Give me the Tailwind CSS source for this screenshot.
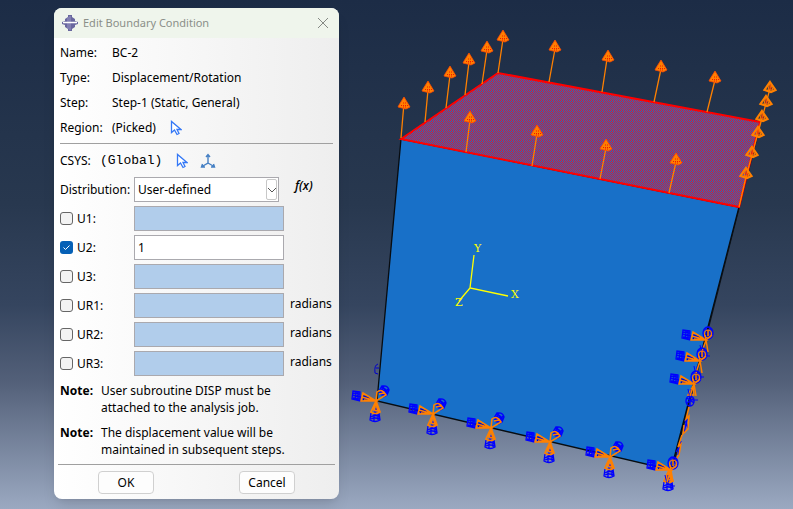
<!DOCTYPE html>
<html lang="en">
<head>
<meta charset="utf-8">
<title>Edit Boundary Condition</title>
<script src="https://cdn.jsdelivr.net/npm/@tailwindcss/browser@4"></script>
</head>
<body class="relative min-h-screen overflow-hidden bg-linear-to-b from-[#1c2c46] via-[#2c3c56] via-50% to-[#9ba9c1] font-['Noto_Sans',sans-serif] text-xs text-black">
<svg class="absolute inset-0 h-full w-full" viewBox="0 0 793 509" preserveAspectRatio="xMinYMin slice" role="img" aria-label="Model viewport">
  <defs>
    <linearGradient id="sky" x1="0" y1="0" x2="0" y2="1">
      <stop offset="0" stop-color="#1c2c46"/><stop offset=".4" stop-color="#28384f"/><stop offset=".6" stop-color="#35455f"/><stop offset=".75" stop-color="#536079"/><stop offset="1" stop-color="#9ba9c1"/>
    </linearGradient>
    <pattern id="mesh" width="2" height="2" patternUnits="userSpaceOnUse">
      <rect width="2" height="2" fill="#1870c8"/><rect width="1" height="1" fill="#e6142a"/><rect x="1" y="1" width="1" height="1" fill="#e6142a"/>
    </pattern>
    <g id="head">
      <path d="M0 0L6 10L2 12L-6 10L-5 8Z" fill="#ff8000" stroke="#ff4a00" stroke-width=".8"/>
      <path d="M-3 8.500H4M-1 6H2M-1 10H2" stroke="#f01800" stroke-width="1" stroke-dasharray="1 1"/>
    </g>
    <g id="openhead">
      <path d="M0 1L5.500 9L1 11L-5.500 9Z" fill="none" stroke="#ff8000" stroke-width="2.200"/>
      <path d="M0 1L-2 9L3 9Z" fill="#e02010" fill-opacity=".5" stroke="#ff8000"/>
    </g>
    <g id="left" fill="none">
      <path d="M-16 -9L-23 -10L-24 -2L-16 0ZM-20 -9L-21 -1M-24 -6L-15 -4M-18 -9L-18 -1M-23 -8L-16 -7M-23 -3L-16 -2" stroke="#00f" stroke-width="1.300"/>
      <path d="M-14 -5L-5 -2M-13 -2L-7 -1" stroke="#00c" stroke-width="2"/>
      <path d="M0 0L-13 -8L-15 0ZM-14 -4L0 0L-12 -1" stroke="#ff8000" stroke-width="1.500"/>
    </g>
    <g id="down" fill="none">
      <path d="M-5 12L-6 19Q-1 22 4 19L3 12M-5 16Q-1 13 4 16M-2 14V20M2 13V19M-5 18Q-1 16 4 18" stroke="#00f" stroke-width="1.300"/>
      <path d="M-2 9H2M-1 11V15" stroke="#00f" stroke-width="3"/>
      <path d="M0 0L-5 11Q-1 14 4 11ZM0 1L-2 9L2 10Z" stroke="#ff8000" stroke-width="1.700"/>
    </g>
    <g id="up" fill="none">
      <path d="M3 -10L6 -15Q12 -16 13 -11L11 -6L7 -4M4 -12Q9 -12 11 -6M6 -14Q10 -12 12 -8M4 -9L8 -5M8 -15L5 -9M12 -12L8 -6" stroke="#00f" stroke-width="1.400"/>
      <path d="M4 -7L7 -9" stroke="#00f" stroke-width="4"/>
      <path d="M0 0L1 -9Q6 -13 10 -6ZM3 -7L8 -8" stroke="#ff8000" stroke-width="1.600"/>
    </g>
    <g id="edge" fill="none">
      <ellipse cx="2" cy="-7" rx="5" ry="6" stroke="#00f" stroke-width="1.300"/>
      <path d="M-2 -10H6M-2 -7H6M-1 -4H6M0 -12V-3M4 -12V-3" stroke="#00f"/>
      <path d="M-6 5L-4 14M-3 5V14M-3 16H4" stroke="#00f"/>
      <ellipse cx="2" cy="-6" rx="3.500" ry="4" stroke="#ff8000" stroke-width="1.200"/>
      <path d="M2 -10V-4M0 0L-1 -5M0 0L6 -5M0 0L-4 12M0 0L2 12" stroke="#ff8000" stroke-width="1.500"/>
    </g>
    <g id="support"><use href="#left"/><use href="#down"/><use href="#up"/></g>
  </defs>
  <rect width="793" height="509" fill="url(#sky)"/>
  <path d="M760 122L739 207L671 470L675 462L757 140Z" fill="#101820"/>
  <path d="M401 139L739 207L671 470L377 401Z" fill="#1870c8" stroke="#080c10" stroke-width="1.300"/>
  <path d="M401 139L498 73L760 122L739 207Z" fill="url(#mesh)" stroke="#f00" stroke-width="2"/>
  <path d="M401 138L404 103M425 122L428 90M446 108L450 75M465 95L469 62M482 84L487 50M498 73L503 39M549 82L555 49M602 92L607 59M654 102L661 69M707 112L715 80M466 152L470 120M532 166L537 134M600 179L606 148M669 193L676 162M739 207L746 177L771 85" fill="none" stroke="#ff8000" stroke-width="1.300"/>
  <use href="#head" x="404" y="97"/><use href="#head" x="428" y="81"/><use href="#head" x="450" y="66"/><use href="#head" x="469" y="53"/><use href="#head" x="487" y="41"/><use href="#head" x="503" y="30"/><use href="#head" x="555" y="40"/><use href="#head" x="470" y="111"/><use href="#head" x="537" y="125"/><use href="#head" x="608" y="50"/><use href="#head" x="661" y="60"/><use href="#head" x="715" y="71"/><use href="#head" x="606" y="139"/><use href="#head" x="676" y="153"/>
  <use href="#openhead" x="770" y="81"/><use href="#openhead" x="766" y="95"/><use href="#openhead" x="762" y="110"/><use href="#openhead" x="758" y="126"/><use href="#openhead" x="752" y="146"/><use href="#openhead" x="746" y="167"/>
  <path d="M378 364Q374 365 375 373L378 374M376 368H379" fill="none" stroke="#00c"/>
  <use href="#support" x="376" y="401"/><use href="#support" x="433" y="414"/><use href="#support" x="491" y="428"/><use href="#support" x="550" y="442"/><use href="#support" x="610" y="457"/>
  <g fill="none" stroke="#00f" stroke-width="1.400">
    <ellipse cx="690" cy="401" rx="4" ry="5"/><path d="M687 398L694 403M687 403L694 398M690 393V406M685 420L688 428M687 419L684 433M681 441L678 455M676 452L681 444M671 457L677 461"/>
  </g>
  <path d="M693 386L688 395L694 395ZM689 407L686 419L689 416L688 429L683 434L684 425M682 435L678 447L681 444L679 455L675 461" fill="none" stroke="#ff8000" stroke-width="1.500"/>
  <use href="#left" x="706" y="340"/><use href="#edge" x="706" y="340"/>
  <use href="#left" x="700" y="361"/><use href="#edge" x="700" y="361"/>
  <use href="#left" x="694" y="384"/><use href="#edge" x="694" y="384"/>
  <use href="#left" x="671" y="470"/><use href="#down" x="669" y="470"/><use href="#edge" x="671" y="470"/>
  <path d="M474 255L470 288L508 296M470 288L459 301" fill="none" stroke="#ff0" stroke-width="1.300"/>
  <g class="font-['DejaVu_Serif',serif]" fill="#ff0" font-size="11"><text x="474" y="252">Y</text><text x="511" y="298">X</text><text x="455" y="306">Z</text></g>
</svg>

<main class="relative mt-2 ml-[54px] w-[285px] overflow-hidden rounded-lg bg-linear-to-r from-white to-[#eeeeee] pb-[5px] shadow-lg">
  <header class="flex h-[30px] items-center bg-[#eff5ec] pr-2 pl-2">
    <svg class="h-4 w-4" viewBox="0 0 16 16" aria-hidden="true"><path d="M6 0H10V2L13 4V6L16 7V9L13 10V12L10 14V16H6V14L3 12V10L0 9V7L3 6V4L6 2Z" fill="#69679f"/><path d="M6 2V14M8 1V15" stroke="#9997c5"/><path d="M1 7.500H15" stroke="#fff" stroke-width="1.500"/></svg>
    <h1 class="ml-[5px] grow text-[11px] text-[#8b8f89]">Edit Boundary Condition</h1>
    <button aria-label="Close" class="flex h-4 w-4 items-center justify-center"><svg class="h-3 w-3" viewBox="0 0 12 12" fill="none" stroke="#858984"><path d="M1 1L11 11M11 1L1 11"/></svg></button>
  </header>
  <dl class="grid grid-cols-[52px_1fr] px-1.5 pt-0.5 leading-[25px]">
    <dt>Name:</dt><dd>BC-2</dd>
    <dt>Type:</dt><dd>Displacement/Rotation</dd>
    <dt>Step:</dt><dd>Step-1 (Static, General)</dd>
    <dt>Region:</dt>
    <dd class="flex items-center gap-3.5">(Picked)
      <button aria-label="Edit region"><svg class="block h-4 w-3" viewBox="0 0 12 16" fill="#fff" stroke="#3478f6" stroke-width="1.300"><path d="M1.500 1.500V12.500L4.500 10L7 14.500L9 13.500L7 9.500H11Z"/></svg></button>
    </dd>
  </dl>
  <hr class="mx-1.5 mt-[3px] border-[#a0a0a0]">
  <div class="flex h-[33px] items-center px-1.5">
    <span class="w-10">CSYS:</span><span class="font-['Liberation_Mono',monospace] text-[13px]">(Global)</span>
    <button class="ml-3.5" aria-label="Edit CSYS"><svg class="block h-4 w-3" viewBox="0 0 12 16" fill="#fff" stroke="#3478f6" stroke-width="1.300"><path d="M1.500 1.500V12.500L4.500 10L7 14.500L9 13.500L7 9.500H11Z"/></svg></button>
    <button class="ml-3" aria-label="Create datum CSYS"><svg class="block h-4 w-4" viewBox="0 0 16 16" fill="none" stroke="#4680c4" stroke-width="1.400"><path d="M8 2V10L2 13.500M8 10L14 13.500M6 4L8 1.500L10 4M2.500 11L1.500 14H5M13.500 11L14.500 14H11"/></svg></button>
  </div>
  <form id="bc" class="flex flex-col gap-1 px-1.5">
    <div class="flex h-[25px] items-center">
      <label for="dist" class="w-[74px] whitespace-nowrap">Distribution:</label>
      <div class="relative h-full w-[145px]">
        <select id="dist" class="h-full w-full appearance-none border border-[#aaa9ae] bg-white pl-[3px]"><option>User-defined</option></select>
        <span class="pointer-events-none absolute inset-y-0.5 right-0.5 flex w-[11px] items-center justify-center rounded-xs border border-[#c8c8c8] bg-white"><svg class="h-2 w-2 shrink-0" viewBox="0 0 8 8" fill="none" stroke="#555"><path d="M0 2L4 6L8 2"/></svg></span>
      </div>
      <button type="button" class="ml-4 pb-2 font-['Open_Sans',sans-serif] text-xs font-semibold italic" aria-label="Create field">f(x)</button>
    </div>
    <div class="flex h-[25px] items-center"><label class="flex w-[74px] items-center gap-1"><input type="checkbox" class="h-[13px] w-[13px] appearance-none rounded-[3px] border border-[#666] bg-[#f3f3f3]">U1:</label><input aria-label="U1 value" disabled class="h-full w-[150px] border border-[#aaa9ae] bg-[#b1cdeb] px-[3px]"></div>
    <div class="flex h-[25px] items-center"><label class="flex w-[74px] items-center gap-1"><span class="relative flex"><input type="checkbox" checked class="h-[13px] w-[13px] appearance-none rounded-[3px] bg-[#0560b6]"><svg class="pointer-events-none absolute inset-0" viewBox="0 0 13 13" fill="none" stroke="#fff"><path d="M3.500 6.500L5.500 8.500L9.500 4.500"/></svg></span>U2:</label><input aria-label="U2 value" value="1" class="h-full w-[150px] border border-[#aaa9ae] bg-white px-[3px]"></div>
    <div class="flex h-[25px] items-center"><label class="flex w-[74px] items-center gap-1"><input type="checkbox" class="h-[13px] w-[13px] appearance-none rounded-[3px] border border-[#666] bg-[#f3f3f3]">U3:</label><input aria-label="U3 value" disabled class="h-full w-[150px] border border-[#aaa9ae] bg-[#b1cdeb] px-[3px]"></div>
    <div class="flex h-[25px] items-center"><label class="flex w-[74px] items-center gap-1"><input type="checkbox" class="h-[13px] w-[13px] appearance-none rounded-[3px] border border-[#666] bg-[#f3f3f3]">UR1:</label><input aria-label="UR1 value" disabled class="h-full w-[150px] border border-[#aaa9ae] bg-[#b1cdeb] px-[3px]"><span class="ml-1.5 pb-1">radians</span></div>
    <div class="flex h-[25px] items-center"><label class="flex w-[74px] items-center gap-1"><input type="checkbox" class="h-[13px] w-[13px] appearance-none rounded-[3px] border border-[#666] bg-[#f3f3f3]">UR2:</label><input aria-label="UR2 value" disabled class="h-full w-[150px] border border-[#aaa9ae] bg-[#b1cdeb] px-[3px]"><span class="ml-1.5 pb-1">radians</span></div>
    <div class="flex h-[25px] items-center"><label class="flex w-[74px] items-center gap-1"><input type="checkbox" class="h-[13px] w-[13px] appearance-none rounded-[3px] border border-[#666] bg-[#f3f3f3]">UR3:</label><input aria-label="UR3 value" disabled class="h-full w-[150px] border border-[#aaa9ae] bg-[#b1cdeb] px-[3px]"><span class="ml-1.5 pb-1">radians</span></div>
  </form>
  <div class="mt-1.5 grid grid-cols-[41px_1fr] gap-y-2 px-1.5 leading-[17px]">
    <strong>Note:</strong><p>User subroutine DISP must be<br>attached to the analysis job.</p>
    <strong>Note:</strong><p>The displacement value will be<br>maintained in subsequent steps.</p>
  </div>
  <hr class="mx-1 mt-1.5 border-[#a0a0a0]">
  <footer class="mt-1.5 flex justify-between px-11">
    <button form="bc" class="h-[23px] w-14 rounded border border-[#d0d0d0] bg-[#fdfdfd]">OK</button>
    <button type="button" class="h-[23px] w-14 rounded border border-[#d0d0d0] bg-[#fdfdfd]">Cancel</button>
  </footer>
</main>
</body>
</html>
